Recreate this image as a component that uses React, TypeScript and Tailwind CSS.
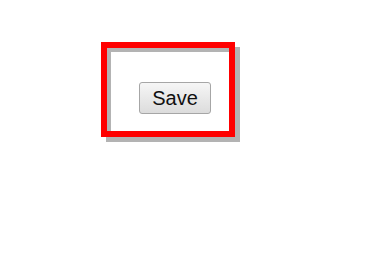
export default function App() {
  return (
    <div className="min-h-[276px] w-full bg-white pl-[101px] pt-[42px]">
      {/* red frame with offset gray shadow */}
      <div className="flex w-[134px] h-[95px] border-[6px] border-solid border-[#ff0000] shadow-[5px_5px_0_#b3b3b3]">
        {/* inner gray edge on top and left */}
        <div className="flex flex-1 bg-[#b3b3b3] pl-[4px] pt-[4px]">
          <div className="flex-1 bg-white pl-[28px] pt-[30px]">
            <button
              type="button"
              className="h-[32px] w-[72px] rounded-[3px] border border-[#a6a6a6] bg-gradient-to-b from-[#f6f6f6] to-[#dcdcdc] font-['Liberation_Sans',Arial,sans-serif] text-[20px] leading-none text-[#111]"
            >
              Save
            </button>
          </div>
        </div>
      </div>
    </div>
  );
}
